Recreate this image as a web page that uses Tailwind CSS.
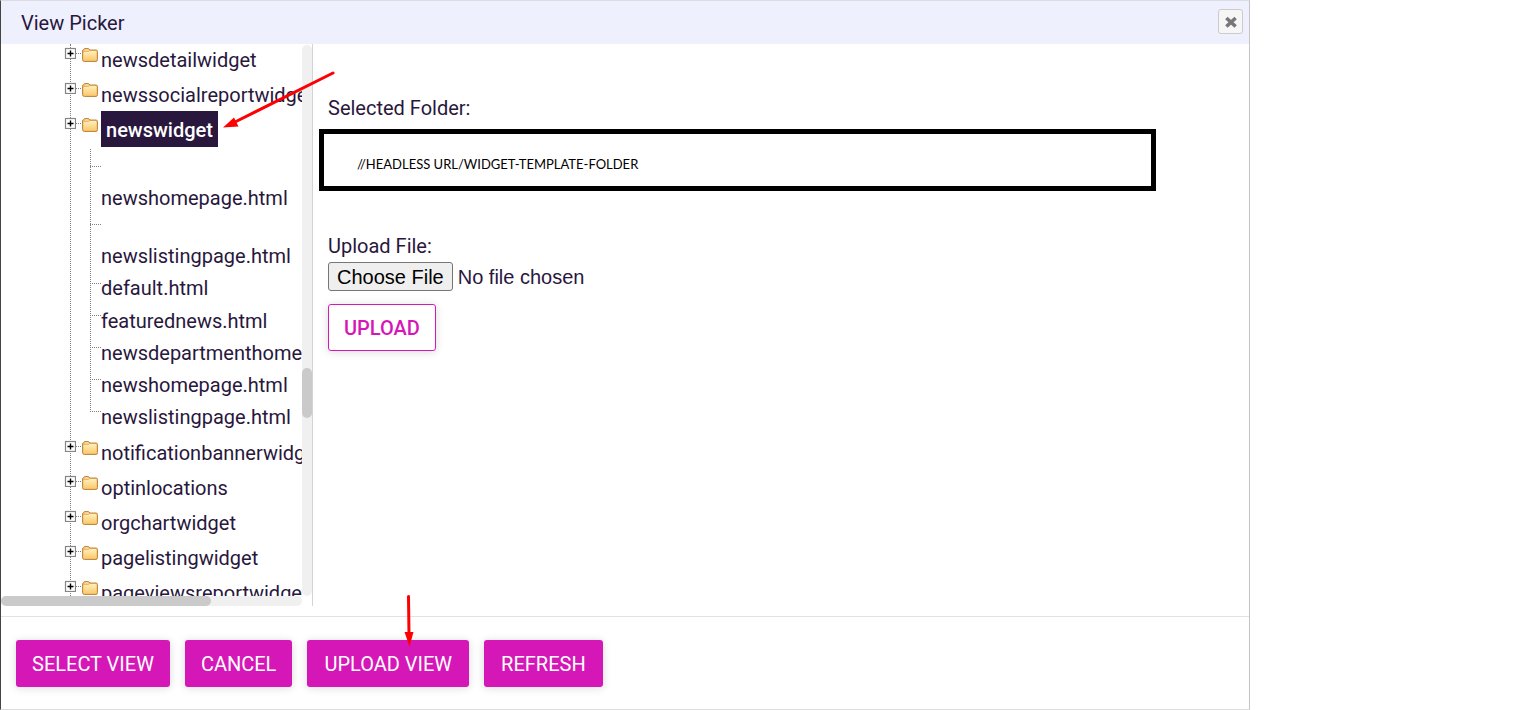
<!DOCTYPE html>
<html lang="en">
<head>
  <meta charset="UTF-8">
  <meta name="viewport" content="width=device-width, initial-scale=1.0">
  <title>View Picker</title>
  <script src="https://cdn.jsdelivr.net/npm/@tailwindcss/browser@4"></script>
</head>
<body class="bg-white font-[Roboto,sans-serif] text-xl text-[#29173d]">

  <!-- icons used by the tree -->
  <svg class="absolute size-0">
    <defs>
      <linearGradient id="folderFill" x1="0" y1="0" x2="0" y2="1">
        <stop offset="0" stop-color="#fff0bd"/>
        <stop offset="1" stop-color="#fbc96c"/>
      </linearGradient>
    </defs>
    <symbol id="plus" viewBox="0 0 12 12">
      <rect x="1.500" y="1.500" width="10" height="10" fill="#fff" stroke="#858585" stroke-width="1.2"/>
      <path d="M3.500 6.500h6M6.500 3.500v6" stroke="#000" stroke-width="1.4"/>
    </symbol>
    <symbol id="folder" viewBox="0 0 16 16">
      <path d="M.5 12.500V4Q.5 3 1.500 2.500L2.500 1.500H6.500L8 3H14Q15.500 3 15.500 4.500V12.500Q15.500 14.500 14 14.500H2.500Q.5 14.500 .5 12.500Z" fill="#eeb765" stroke="#c18a42"/>
      <path d="M1.500 6Q1.500 5 2.500 5H6.500L7.500 4H13.500Q14.500 4 14.500 5V12.500Q14.500 13.500 13.500 13.500H2.500Q1.500 13.500 1.500 12.500Z" fill="url(#folderFill)"/>
      <path d="M2.500 3.500L3.500 2.500H6L7 3.500Z" fill="#fff3cf"/>
    </symbol>
  </svg>

  <div class="relative flex min-h-screen w-full max-w-[1250px] flex-col border-y border-r border-l border-y-[#dcdce0] border-r-[#c4c4c4] border-l-[#444]">

    <header class="flex h-[43px] items-start justify-between bg-[#eef0fe] pr-1.5 pl-5">
      <h1 class="leading-11">View Picker</h1>
      <button aria-label="Close" class="mt-2 flex size-[25px] items-center justify-center rounded-[3px] border border-[#cbcbcb] bg-[#f6f6f6]">
        <svg class="size-4" viewBox="0 0 16 16"><path d="M4.700 5.200L11.300 11.300M11.300 5.200L4.700 11.300" stroke="#777" stroke-width="3.600" stroke-linecap="square"/></svg>
      </button>
    </header>

    <main class="flex h-[562px]">
      <!-- folder tree -->
      <div class="grid w-[312px] shrink-0 grid-cols-[minmax(0,1fr)_10px] grid-rows-[minmax(0,1fr)_10px] border-r border-[#d4d4d4]">
        <nav class="overflow-hidden pl-[63px]">
          <ul class="relative whitespace-nowrap before:absolute before:inset-y-0 before:left-1.5 before:border-l before:border-dotted before:border-[#808080]">
            <li class="relative flex h-[35px]">
              <button aria-label="Expand" class="mt-[3px] size-3 shrink-0"><svg class="size-3"><use href="#plus"/></svg></button>
              <span class="mt-[9px] mr-px w-[5px] shrink-0 border-t border-dotted border-[#808080]"></span>
              <svg class="mt-[3px] mr-[3px] size-4 shrink-0"><use href="#folder"/></svg>
              <a href="#" class="leading-8">newsdetailwidget</a>
            </li>
            <li class="relative flex h-[35px]">
              <button aria-label="Expand" class="mt-[3px] size-3 shrink-0"><svg class="size-3"><use href="#plus"/></svg></button>
              <span class="mt-[9px] mr-px w-[5px] shrink-0 border-t border-dotted border-[#808080]"></span>
              <svg class="mt-[3px] mr-[3px] size-4 shrink-0"><use href="#folder"/></svg>
              <a href="#" class="leading-8">newssocialreportwidget</a>
            </li>
            <li class="relative">
              <div class="flex h-[35px] items-start">
                <button aria-label="Collapse" class="mt-[3px] size-3 shrink-0"><svg class="size-3"><use href="#plus"/></svg></button>
                <span class="mt-[9px] mr-px w-[5px] shrink-0 border-t border-dotted border-[#808080]"></span>
                <svg class="mt-[3px] mr-[3px] size-4 shrink-0"><use href="#folder"/></svg>
                <a href="#" class="-mt-[3px] h-9 bg-[#29173d] px-[5px] leading-[38px] font-medium text-white">newswidget</a>
              </div>
              <ul class="relative ml-[26px] pb-1 before:absolute before:top-0 before:bottom-[25px] before:left-0 before:border-l before:border-dotted before:border-[#808080]">
                <li class="flex h-[66px]">
                  <span class="mt-[17px] w-[11px] shrink-0 border-t border-dotted border-[#808080]"></span>
                  <a href="#" class="self-end pb-px leading-8">newshomepage.html</a>
                </li>
                <li class="flex h-[58px]">
                  <span class="mt-[9px] w-[11px] shrink-0 border-t border-dotted border-[#808080]"></span>
                  <a href="#" class="self-end pb-px leading-8">newslistingpage.html</a>
                </li>
                <li class="flex h-8">
                  <span class="mt-2.5 w-[11px] shrink-0 border-t border-dotted border-[#808080]"></span>
                  <a href="#" class="leading-[30px]">default.html</a>
                </li>
                <li class="flex h-8">
                  <span class="mt-2.5 w-[11px] shrink-0 border-t border-dotted border-[#808080]"></span>
                  <a href="#" class="leading-8">featurednews.html</a>
                </li>
                <li class="flex h-8">
                  <span class="mt-2.5 w-[11px] shrink-0 border-t border-dotted border-[#808080]"></span>
                  <a href="#" class="leading-8">newsdepartmenthome.html</a>
                </li>
                <li class="flex h-8">
                  <span class="mt-2.5 w-[11px] shrink-0 border-t border-dotted border-[#808080]"></span>
                  <a href="#" class="leading-8">newshomepage.html</a>
                </li>
                <li class="flex h-8">
                  <span class="mt-2.5 w-[11px] shrink-0 border-t border-dotted border-[#808080]"></span>
                  <a href="#" class="leading-8">newslistingpage.html</a>
                </li>
              </ul>
            </li>
            <li class="relative flex h-[35px]">
              <button aria-label="Expand" class="mt-[3px] size-3 shrink-0"><svg class="size-3"><use href="#plus"/></svg></button>
              <span class="mt-[9px] mr-px w-[5px] shrink-0 border-t border-dotted border-[#808080]"></span>
              <svg class="mt-[3px] mr-[3px] size-4 shrink-0"><use href="#folder"/></svg>
              <a href="#" class="leading-8">notificationbannerwidget</a>
            </li>
            <li class="relative flex h-[35px]">
              <button aria-label="Expand" class="mt-[3px] size-3 shrink-0"><svg class="size-3"><use href="#plus"/></svg></button>
              <span class="mt-[9px] mr-px w-[5px] shrink-0 border-t border-dotted border-[#808080]"></span>
              <svg class="mt-[3px] mr-[3px] size-4 shrink-0"><use href="#folder"/></svg>
              <a href="#" class="leading-8">optinlocations</a>
            </li>
            <li class="relative flex h-[35px]">
              <button aria-label="Expand" class="mt-[3px] size-3 shrink-0"><svg class="size-3"><use href="#plus"/></svg></button>
              <span class="mt-[9px] mr-px w-[5px] shrink-0 border-t border-dotted border-[#808080]"></span>
              <svg class="mt-[3px] mr-[3px] size-4 shrink-0"><use href="#folder"/></svg>
              <a href="#" class="leading-8">orgchartwidget</a>
            </li>
            <li class="relative flex h-[35px]">
              <button aria-label="Expand" class="mt-[3px] size-3 shrink-0"><svg class="size-3"><use href="#plus"/></svg></button>
              <span class="mt-[9px] mr-px w-[5px] shrink-0 border-t border-dotted border-[#808080]"></span>
              <svg class="mt-[3px] mr-[3px] size-4 shrink-0"><use href="#folder"/></svg>
              <a href="#" class="leading-8">pagelistingwidget</a>
            </li>
            <li class="relative flex h-[35px]">
              <button aria-label="Expand" class="mt-[3px] size-3 shrink-0"><svg class="size-3"><use href="#plus"/></svg></button>
              <span class="mt-[9px] mr-px w-[5px] shrink-0 border-t border-dotted border-[#808080]"></span>
              <svg class="mt-[3px] mr-[3px] size-4 shrink-0"><use href="#folder"/></svg>
              <a href="#" class="leading-8">pageviewsreportwidget</a>
            </li>
          </ul>
        </nav>
        <div class="mt-px flex flex-col rounded-full bg-[#f0f0f0] pt-[323px]"><div class="h-[50px] rounded-full bg-[#cacaca]"></div></div>
        <div class="rounded-full bg-[#f0f0f0]"><div class="h-full w-[210px] rounded-full bg-[#cacaca]"></div></div>
      </div>

      <!-- upload form -->
      <form class="flex min-w-0 flex-1 flex-col items-start pt-[50px] pr-[93px] pl-1.5">
        <label for="folder-path" class="ml-[9px] leading-7">Selected Folder:</label>
        <input id="folder-path" type="text" readonly value="//HEADLESS URL/WIDGET-TEMPLATE-FOLDER" class="mt-[7px] h-[62px] w-full border-[5px] border-black px-[33px] pt-2 font-[Lato,sans-serif] text-[13px] text-black outline-none">
        <label for="view-file" class="mt-10 ml-[9px] leading-[30px]">Upload File:</label>
        <input id="view-file" type="file" class="mt-px ml-[9px] font-['Liberation_Sans',sans-serif] leading-7 file:mr-[5px] file:h-[29px] file:rounded-[3px] file:border file:border-solid file:border-[#767676] file:bg-[#efefef] file:px-2 file:leading-6 file:text-black">
        <button type="button" class="mt-[13px] ml-[9px] h-[47px] rounded-[3px] border border-[#d617b8] px-[15px] font-medium text-[#d617b8] shadow-[0_1px_8px] shadow-black/15">UPLOAD</button>
      </form>
    </main>

    <footer class="mt-2.5 flex flex-1 items-start gap-[15px] border-t border-[#e2e2e2] px-[15px] pt-[23px] text-white">
      <button class="h-[47px] rounded-[3px] bg-[#d617b8] px-4 shadow-[0_1px_8px] shadow-black/15">SELECT VIEW</button>
      <button class="h-[47px] rounded-[3px] bg-[#d617b8] px-4 shadow-[0_1px_8px] shadow-black/15">CANCEL</button>
      <button class="h-[47px] rounded-[3px] bg-[#d617b8] px-[17px] shadow-[0_1px_8px] shadow-black/15">UPLOAD VIEW</button>
      <button class="h-[47px] rounded-[3px] bg-[#d617b8] px-[17px] shadow-[0_1px_8px] shadow-black/15">REFRESH</button>
    </footer>

    <!-- pointer arrows -->
    <svg class="pointer-events-none absolute top-[69px] left-[220px] h-[62px] w-[116px]" viewBox="0 0 116 62">
      <path d="M112 3L14 52" stroke="#f00" stroke-width="3" stroke-linecap="round"/>
      <path d="M2 57.500L13 47.500L17.500 56.500Z" fill="#f00"/>
    </svg>
    <svg class="pointer-events-none absolute top-[592px] left-[402px] h-[56px] w-3" viewBox="0 0 12 56">
      <path d="M5.500 3.500L6 42" stroke="#f00" stroke-width="3" stroke-linecap="round"/>
      <path d="M1.500 39H10.500L6.500 53.500Z" fill="#f00"/>
    </svg>
  </div>
</body>
</html>
